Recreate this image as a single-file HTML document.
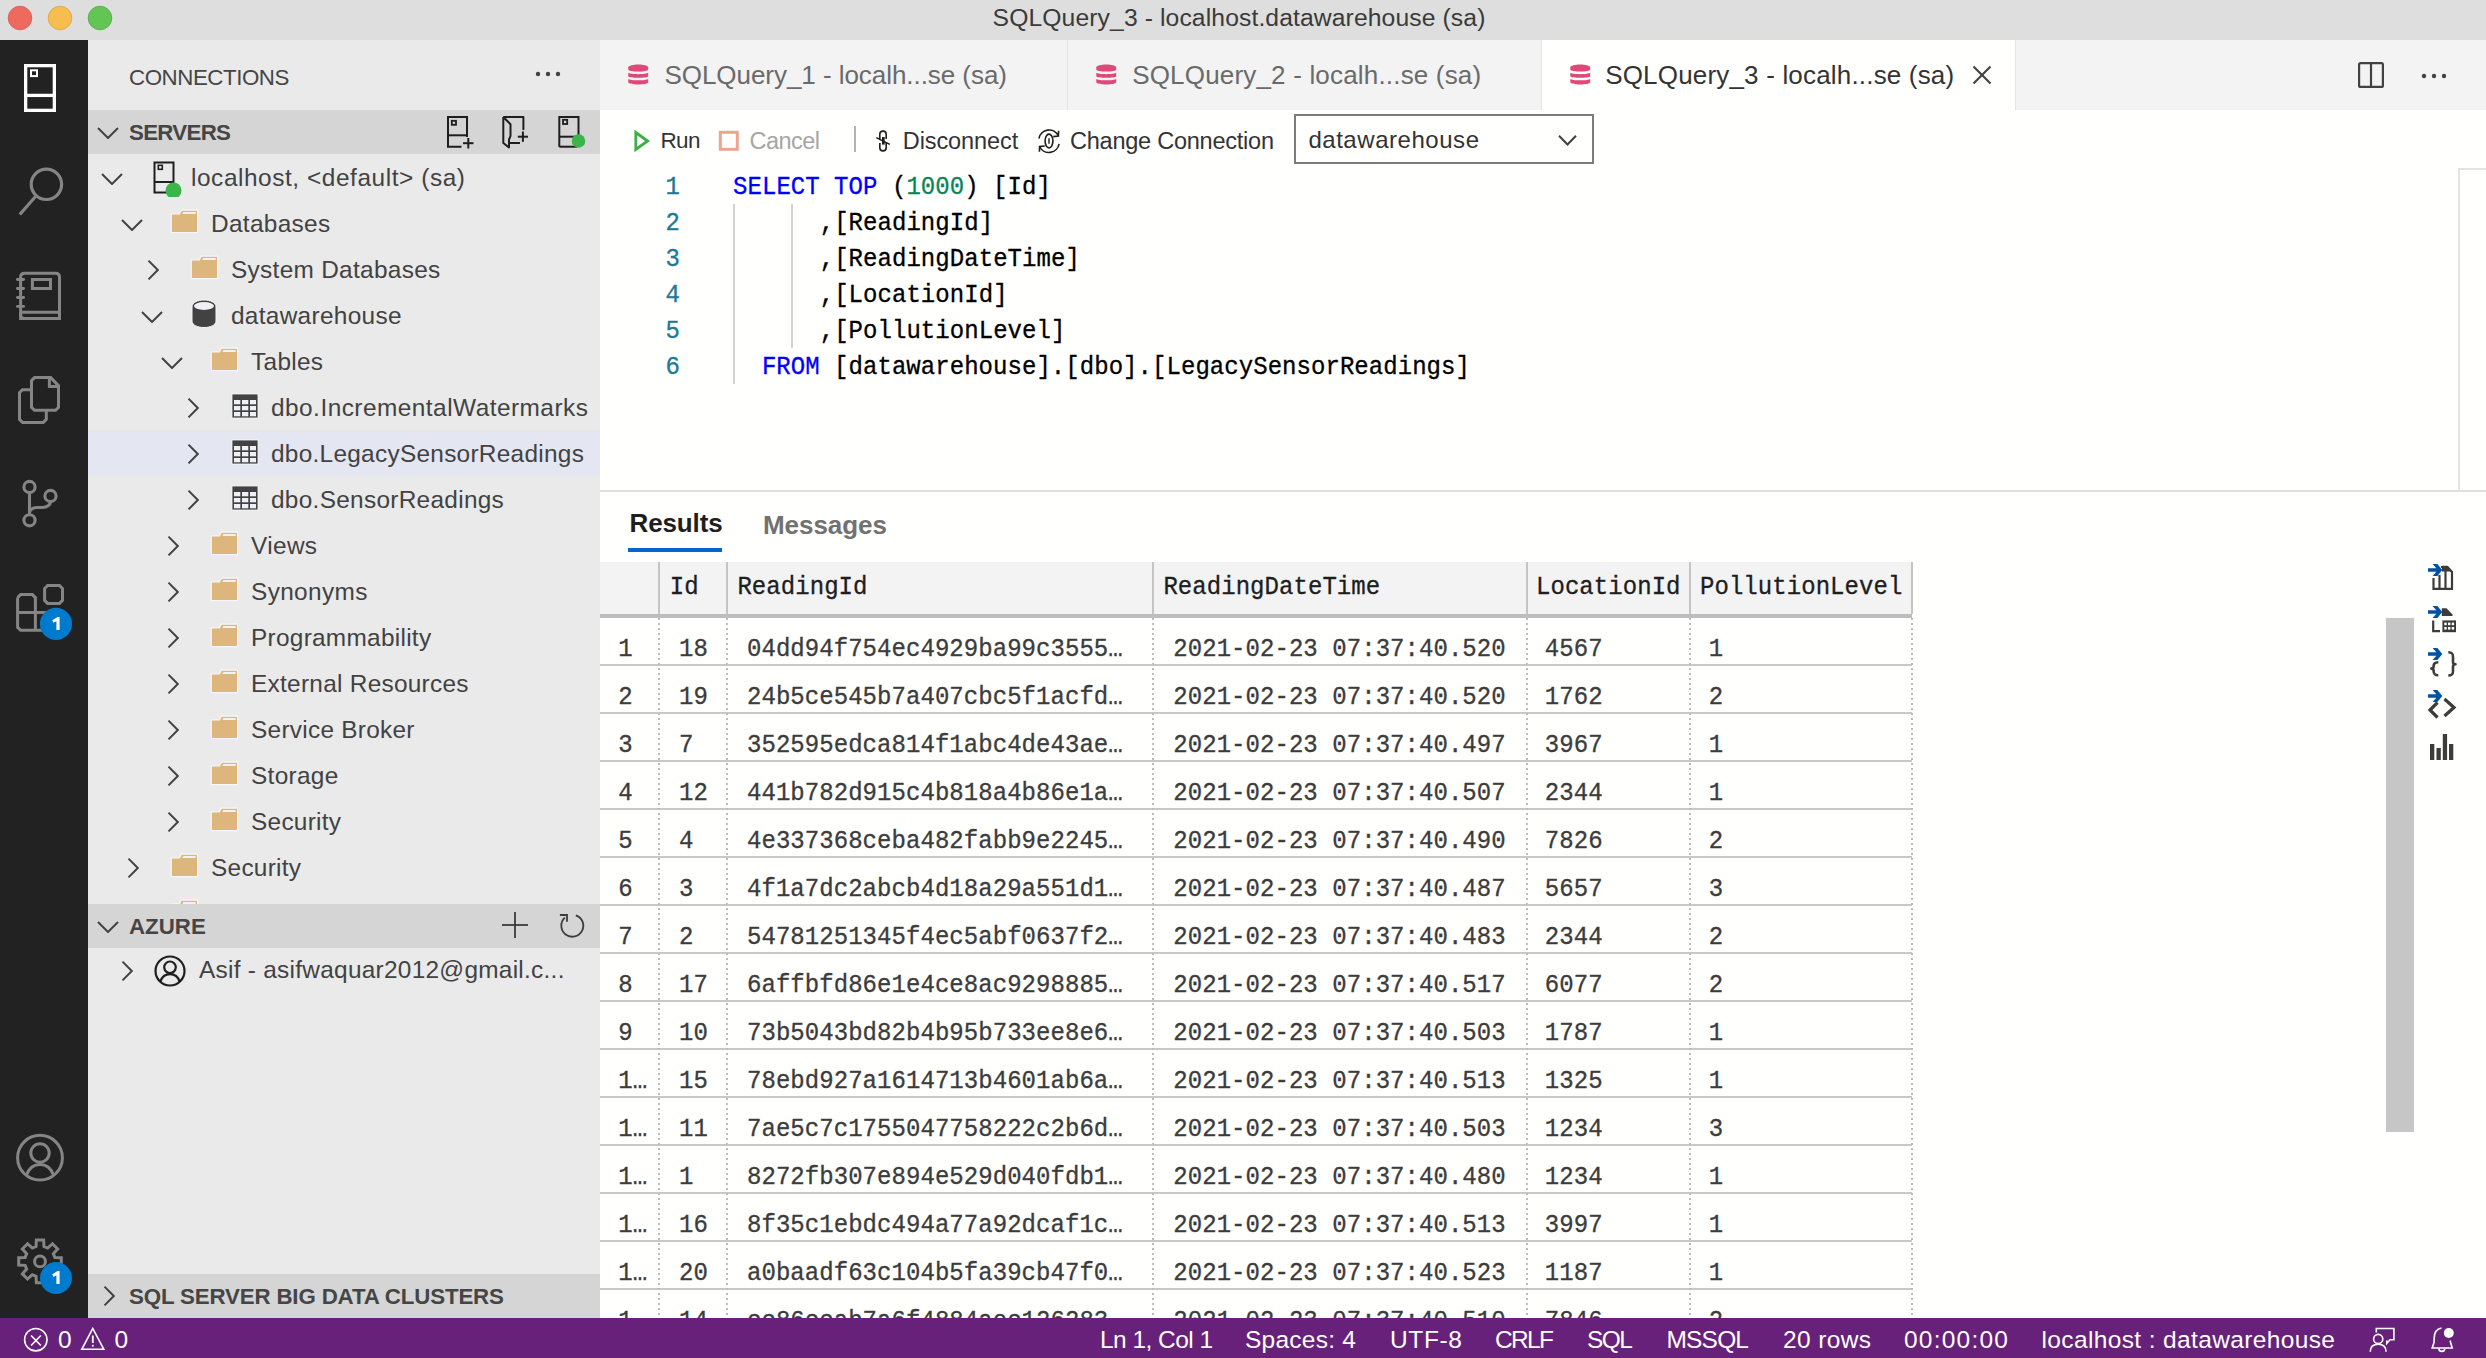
<!DOCTYPE html>
<html><head><meta charset="utf-8"><style>
html,body{margin:0;padding:0;width:2486px;height:1358px;overflow:hidden;background:#fffffe;}
.t{position:absolute;white-space:pre;line-height:1;}
.r{position:absolute;display:block;}
</style></head><body>
<div class="r" style="left:0px;top:0px;width:2486px;height:40px;background:#dedede;"></div>
<div class="r" style="left:0px;top:40px;width:88px;height:1278px;background:#222222;"></div>
<div class="r" style="left:88px;top:40px;width:512px;height:1278px;background:#eaeaea;"></div>
<div class="r" style="left:600px;top:40px;width:1886px;height:70px;background:#f3f3f3;"></div>
<div class="r" style="left:600px;top:110px;width:1886px;height:1208px;background:#fffffe;"></div>
<div class="r" style="left:0px;top:1318px;width:2486px;height:40px;background:#68217a;"></div>
<svg class="r" style="left:7px;top:5px;" width="26" height="26" viewBox="0 0 26 26"><circle cx="13" cy="13" r="11.8" fill="#ee6a5f" stroke="#d35a50" stroke-width="0.8"/></svg>
<svg class="r" style="left:47px;top:5px;" width="26" height="26" viewBox="0 0 26 26"><circle cx="13" cy="13" r="11.8" fill="#f5be4f" stroke="#d9a23f" stroke-width="0.8"/></svg>
<svg class="r" style="left:87px;top:5px;" width="26" height="26" viewBox="0 0 26 26"><circle cx="13" cy="13" r="11.8" fill="#62c554" stroke="#52a844" stroke-width="0.8"/></svg>
<div class="t" style="left:992.6px;top:5.90px;font-size:24.70px;color:#3a3a3a;font-weight:400;font-family:'Liberation Sans', sans-serif;letter-spacing:0.106px;">SQLQuery_3 - localhost.datawarehouse (sa)</div>
<svg class="r" style="left:0px;top:40px;" width="88" height="100" viewBox="0 0 88 100"><g fill="none" stroke="#ffffff" stroke-width="3.3">
<rect x="25.65" y="25.65" width="28.7" height="44.7"/>
<line x1="25.65" y1="55.4" x2="54.35" y2="55.4"/>
<rect x="31" y="30.3" width="6" height="5.8" stroke-width="2"/>
</g></svg>
<svg class="r" style="left:0px;top:150px;" width="88" height="80" viewBox="0 0 88 80"><g fill="none" stroke="#858585" stroke-width="3.2" stroke-linecap="butt">
<circle cx="46.4" cy="34.3" r="15.2"/>
<line x1="19.8" y1="64.5" x2="35.5" y2="46.5"/>
</g></svg>
<svg class="r" style="left:0px;top:262px;" width="88" height="70" viewBox="0 0 88 70"><g fill="none" stroke="#858585" stroke-width="3">
<path d="M59.5 56.4 L20.6 56.4 L20.6 15.3 Q20.6 11.3 24.6 11.3 L55.5 11.3 Q59.5 11.3 59.5 15.3 Z"/>
<path d="M20.6 50.3 L59.5 50.3"/>
<path d="M20.6 50.3 L20.6 52.4 Q20.6 56.4 24.6 56.4"/>
<rect x="32.4" y="17.5" width="18.1" height="9"/>
</g>
<g stroke="#858585" stroke-width="2.8" stroke-linecap="round">
<line x1="17.4" y1="17.5" x2="23.6" y2="17.5"/><line x1="17.4" y1="26.5" x2="23.6" y2="26.5"/>
<line x1="17.4" y1="35.5" x2="23.6" y2="35.5"/><line x1="17.4" y1="44.4" x2="23.6" y2="44.4"/>
</g></svg>
<svg class="r" style="left:0px;top:366px;" width="88" height="70" viewBox="0 0 88 70"><g fill="none" stroke="#858585" stroke-width="3" stroke-linejoin="miter">
<path d="M31.5 23.7 L22.5 23.7 L19.5 26.7 L19.5 53.4 L22.5 56.4 L43.3 56.4 L46.3 53.4 L46.3 44.3"/>
<path d="M34.5 11.6 L50.7 11.6 L58.5 19.6 L58.5 41.3 L55.5 44.3 L34.5 44.3 L31.5 41.3 L31.5 14.6 Z"/>
<path d="M49.4 11.6 L49.4 20.4 L58.5 20.4"/>
</g></svg>
<svg class="r" style="left:0px;top:470px;" width="88" height="70" viewBox="0 0 88 70"><g fill="none" stroke="#858585" stroke-width="3.1">
<circle cx="29.5" cy="17" r="5.6"/><circle cx="50.5" cy="26" r="5.6"/><circle cx="29.5" cy="50.3" r="5.6"/>
<path d="M29.5 22.6 L29.5 44.7"/>
<path d="M29.5 42 C31 38.5 33.5 37.5 37 37.5 L42.5 37.5 C47 37.5 50.5 35 50.5 31.6"/>
</g></svg>
<svg class="r" style="left:0px;top:576px;" width="88" height="70" viewBox="0 0 88 70"><g fill="none" stroke="#858585" stroke-width="3">
<path d="M17.6 21.6 L20.6 18.6 L32.4 18.6 L35.4 21.6 L35.4 54.3 M17.6 21.6 L17.6 51.3 L20.6 54.3 L53 54.3 L53 36.5 L17.6 36.5"/>
<path d="M47.6 9.5 L59.5 9.5 L62.5 12.5 L62.5 24.4 L59.5 27.4 L47.6 27.4 L44.6 24.4 L44.6 12.5 Z"/>
</g>
<circle cx="56" cy="47.9" r="16.1" fill="#007acc"/>
<path d="M52.3 44.2 L57.6 41 L59.6 41 L59.6 54 L56.4 54 L56.4 45.2 L53.4 46.8 Z" fill="#ffffff"/></svg>
<svg class="r" style="left:0px;top:1128px;" width="88" height="70" viewBox="0 0 88 70"><g fill="none" stroke="#858585" stroke-width="3">
<circle cx="40" cy="29.7" r="22.4"/>
<circle cx="40" cy="25" r="9.2"/>
<path d="M26.5 47 C29 40 34 36.4 40 36.4 C46 36.4 51 40 53.5 47"/>
</g></svg>
<svg class="r" style="left:0px;top:1228px;" width="88" height="90" viewBox="0 0 88 90"><g fill="none" stroke="#858585" stroke-width="3" stroke-linejoin="miter">
<path d="M36.04 18.52 L36.35 12.11 L43.65 12.11 L43.96 18.52 L47.72 20.08 L52.47 15.76 L57.64 20.93 L53.32 25.68 L54.88 29.44 L61.29 29.75 L61.29 37.05 L54.88 37.36 L53.32 41.12 L57.64 45.87 L52.47 51.04 L47.72 46.72 L43.96 48.28 L43.65 54.69 L36.35 54.69 L36.04 48.28 L32.28 46.72 L27.53 51.04 L22.36 45.87 L26.68 41.12 L25.12 37.36 L18.71 37.05 L18.71 29.75 L25.12 29.44 L26.68 25.68 L22.36 20.93 L27.53 15.76 L32.28 20.08 Z"/>
<circle cx="40" cy="33.4" r="5.4"/>
</g>
<circle cx="56" cy="50" r="16" fill="#007acc"/>
<path d="M52.3 46.3 L57.6 43.1 L59.6 43.1 L59.6 56.1 L56.4 56.1 L56.4 47.3 L53.4 48.9 Z" fill="#ffffff"/></svg>
<div class="t" style="left:129.0px;top:66.50px;font-size:22.30px;color:#454545;font-weight:400;font-family:'Liberation Sans', sans-serif;letter-spacing:-0.438px;">CONNECTIONS</div>
<svg class="r" style="left:535px;top:71px;" width="6" height="6" viewBox="0 0 6 6"><circle cx="3" cy="3" r="2.2" fill="#424242"/></svg>
<svg class="r" style="left:545px;top:71px;" width="6" height="6" viewBox="0 0 6 6"><circle cx="3" cy="3" r="2.2" fill="#424242"/></svg>
<svg class="r" style="left:555px;top:71px;" width="6" height="6" viewBox="0 0 6 6"><circle cx="3" cy="3" r="2.2" fill="#424242"/></svg>
<div class="r" style="left:88px;top:110px;width:512px;height:44px;background:#d5d5d5;"></div>
<svg class="r" style="left:97px;top:127px;" width="22" height="12" viewBox="0 0 22 12"><path d="M1 1 L11 11 L21 1" fill="none" stroke="#424242" stroke-width="2"/></svg>
<div class="t" style="left:129.0px;top:122.00px;font-size:22.30px;color:#454545;font-weight:700;font-family:'Liberation Sans', sans-serif;letter-spacing:-0.697px;">SERVERS</div>
<svg class="r" style="left:440px;top:110px;" width="40" height="44" viewBox="0 0 40 44"><g fill="none" stroke="#1e1e1e" stroke-width="2">
<path d="M21.5 36.7 L8 36.7 L8 7 L27 7 L27 27"/><line x1="8" y1="25.3" x2="27" y2="25.3"/>
<rect x="11.8" y="10.8" width="4.2" height="4" stroke-width="1.8"/>
<line x1="28.3" y1="28" x2="28.3" y2="38.5"/><line x1="23" y1="33.2" x2="33.5" y2="33.2"/>
</g></svg>
<svg class="r" style="left:495px;top:110px;" width="40" height="44" viewBox="0 0 40 44"><g fill="none" stroke="#1e1e1e" stroke-width="2" stroke-linejoin="round">
<path d="M8.3 7 L28.4 7 L28.4 20"/>
<path d="M8.3 7 L8.3 33 L14 37.5 L14 30 C14 28.5 15.5 27 15.5 25.7 L15.5 14.3 L8.3 7"/>
<path d="M14 33 L25 33"/>
<line x1="27.9" y1="21.5" x2="27.9" y2="31.8"/><line x1="22.8" y1="26.7" x2="33" y2="26.7"/>
</g></svg>
<svg class="r" style="left:551px;top:110px;" width="40" height="44" viewBox="0 0 40 44"><g fill="none" stroke="#1e1e1e" stroke-width="2">
<path d="M8.3 36.7 L8.3 7 L27.5 7 L27.5 27"/><line x1="8.3" y1="26.7" x2="25" y2="26.7"/><line x1="8.3" y1="36.7" x2="26" y2="36.7"/>
<rect x="12" y="9.8" width="4.2" height="4.2" stroke-width="1.8"/>
</g><circle cx="27.5" cy="31" r="6.8" fill="#3bb44a"/></svg>
<div class="r" style="left:88px;top:430px;width:512px;height:46px;background:#e4e6f1;"></div>
<svg class="r" style="left:101px;top:172.5px;" width="22" height="12" viewBox="0 0 22 12"><path d="M1 1 L11 11 L21 1" fill="none" stroke="#424242" stroke-width="2"/></svg>
<svg class="r" style="left:152px;top:160.5px;" width="30" height="36" viewBox="0 0 30 36"><g fill="none" stroke="#1e1e1e" stroke-width="2">
<rect x="2.5" y="1.5" width="19" height="30"/><line x1="2.5" y1="21" x2="21.5" y2="21"/>
<rect x="6.3" y="4.3" width="4" height="4" stroke-width="1.6"/></g>
<circle cx="21.5" cy="29.5" r="8" fill="#3bb44a"/></svg>
<div class="t" style="left:191.0px;top:166.00px;font-size:24.40px;color:#424242;font-weight:400;font-family:'Liberation Sans', sans-serif;letter-spacing:0.566px;">localhost, &lt;default&gt; (sa)</div>
<svg class="r" style="left:121px;top:218.5px;" width="22" height="12" viewBox="0 0 22 12"><path d="M1 1 L11 11 L21 1" fill="none" stroke="#424242" stroke-width="2"/></svg>
<svg class="r" style="left:169px;top:208px;" width="31" height="27" viewBox="0 0 31 27"><path d="M2 6 L10.4 6 L12.2 2.2 L28 2.2 Q28.6 2.2 28.6 3 L28.6 24 Q28.6 24.6 28 24.6 L3 24.6 Q2.2 24.6 2.2 23.8 L2.2 6.8 Q2.2 6 3 6 Z" fill="#dcb67a" stroke="#f7f8fb" stroke-width="1.2"/>
<path d="M13.2 6 L14.4 4 L26.7 4 L26.7 6 Z" fill="#f0f2f7"/></svg>
<div class="t" style="left:211.0px;top:212.00px;font-size:24.40px;color:#424242;font-weight:400;font-family:'Liberation Sans', sans-serif;letter-spacing:0.321px;">Databases</div>
<svg class="r" style="left:146.5px;top:259.3px;" width="12" height="22" viewBox="0 0 12 22"><path d="M1.5 1.6 L10.8 11 L1.5 20.4" fill="none" stroke="#424242" stroke-width="2"/></svg>
<svg class="r" style="left:189px;top:254px;" width="31" height="27" viewBox="0 0 31 27"><path d="M2 6 L10.4 6 L12.2 2.2 L28 2.2 Q28.6 2.2 28.6 3 L28.6 24 Q28.6 24.6 28 24.6 L3 24.6 Q2.2 24.6 2.2 23.8 L2.2 6.8 Q2.2 6 3 6 Z" fill="#dcb67a" stroke="#f7f8fb" stroke-width="1.2"/>
<path d="M13.2 6 L14.4 4 L26.7 4 L26.7 6 Z" fill="#f0f2f7"/></svg>
<div class="t" style="left:231.0px;top:258.00px;font-size:24.40px;color:#424242;font-weight:400;font-family:'Liberation Sans', sans-serif;letter-spacing:0.300px;">System Databases</div>
<svg class="r" style="left:141px;top:310.5px;" width="22" height="12" viewBox="0 0 22 12"><path d="M1 1 L11 11 L21 1" fill="none" stroke="#424242" stroke-width="2"/></svg>
<svg class="r" style="left:191px;top:299px;overflow:visible;" width="27" height="33" viewBox="0 0 27 33"><path d="M1 8 C1 -1.3 25 -1.3 25 8 L25 22 C25 30.7 1 30.7 1 22 Z" fill="#424242" stroke="#f7f8fb" stroke-width="1"/>
<ellipse cx="13" cy="7" rx="10" ry="3.9" fill="#eef0f5"/></svg>
<div class="t" style="left:231.0px;top:304.00px;font-size:24.40px;color:#424242;font-weight:400;font-family:'Liberation Sans', sans-serif;letter-spacing:0.306px;">datawarehouse</div>
<svg class="r" style="left:161px;top:356.5px;" width="22" height="12" viewBox="0 0 22 12"><path d="M1 1 L11 11 L21 1" fill="none" stroke="#424242" stroke-width="2"/></svg>
<svg class="r" style="left:209px;top:346px;" width="31" height="27" viewBox="0 0 31 27"><path d="M2 6 L10.4 6 L12.2 2.2 L28 2.2 Q28.6 2.2 28.6 3 L28.6 24 Q28.6 24.6 28 24.6 L3 24.6 Q2.2 24.6 2.2 23.8 L2.2 6.8 Q2.2 6 3 6 Z" fill="#dcb67a" stroke="#f7f8fb" stroke-width="1.2"/>
<path d="M13.2 6 L14.4 4 L26.7 4 L26.7 6 Z" fill="#f0f2f7"/></svg>
<div class="t" style="left:251.0px;top:350.00px;font-size:24.40px;color:#424242;font-weight:400;font-family:'Liberation Sans', sans-serif;letter-spacing:0.310px;">Tables</div>
<svg class="r" style="left:186.5px;top:397.3px;" width="12" height="22" viewBox="0 0 12 22"><path d="M1.5 1.6 L10.8 11 L1.5 20.4" fill="none" stroke="#424242" stroke-width="2"/></svg>
<svg class="r" style="left:231px;top:393px;" width="28" height="26" viewBox="0 0 28 26"><rect x="1" y="1" width="26" height="24" fill="#424242" stroke="#f7f8fb" stroke-width="0.8"/>
<g fill="#eef0f5">
<rect x="3" y="7" width="6.3" height="4.3"/><rect x="11" y="7" width="6.3" height="4.3"/><rect x="19" y="7" width="6" height="4.3"/>
<rect x="3" y="13" width="6.3" height="4.3"/><rect x="11" y="13" width="6.3" height="4.3"/><rect x="19" y="13" width="6" height="4.3"/>
<rect x="3" y="19" width="6.3" height="4.3"/><rect x="11" y="19" width="6.3" height="4.3"/><rect x="19" y="19" width="6" height="4.3"/>
</g></svg>
<div class="t" style="left:271.0px;top:396.00px;font-size:24.40px;color:#424242;font-weight:400;font-family:'Liberation Sans', sans-serif;letter-spacing:0.476px;">dbo.IncrementalWatermarks</div>
<svg class="r" style="left:186.5px;top:443.3px;" width="12" height="22" viewBox="0 0 12 22"><path d="M1.5 1.6 L10.8 11 L1.5 20.4" fill="none" stroke="#424242" stroke-width="2"/></svg>
<svg class="r" style="left:231px;top:439px;" width="28" height="26" viewBox="0 0 28 26"><rect x="1" y="1" width="26" height="24" fill="#424242" stroke="#f7f8fb" stroke-width="0.8"/>
<g fill="#eef0f5">
<rect x="3" y="7" width="6.3" height="4.3"/><rect x="11" y="7" width="6.3" height="4.3"/><rect x="19" y="7" width="6" height="4.3"/>
<rect x="3" y="13" width="6.3" height="4.3"/><rect x="11" y="13" width="6.3" height="4.3"/><rect x="19" y="13" width="6" height="4.3"/>
<rect x="3" y="19" width="6.3" height="4.3"/><rect x="11" y="19" width="6.3" height="4.3"/><rect x="19" y="19" width="6" height="4.3"/>
</g></svg>
<div class="t" style="left:271.0px;top:442.00px;font-size:24.40px;color:#424242;font-weight:400;font-family:'Liberation Sans', sans-serif;letter-spacing:0.279px;">dbo.LegacySensorReadings</div>
<svg class="r" style="left:186.5px;top:489.3px;" width="12" height="22" viewBox="0 0 12 22"><path d="M1.5 1.6 L10.8 11 L1.5 20.4" fill="none" stroke="#424242" stroke-width="2"/></svg>
<svg class="r" style="left:231px;top:485px;" width="28" height="26" viewBox="0 0 28 26"><rect x="1" y="1" width="26" height="24" fill="#424242" stroke="#f7f8fb" stroke-width="0.8"/>
<g fill="#eef0f5">
<rect x="3" y="7" width="6.3" height="4.3"/><rect x="11" y="7" width="6.3" height="4.3"/><rect x="19" y="7" width="6" height="4.3"/>
<rect x="3" y="13" width="6.3" height="4.3"/><rect x="11" y="13" width="6.3" height="4.3"/><rect x="19" y="13" width="6" height="4.3"/>
<rect x="3" y="19" width="6.3" height="4.3"/><rect x="11" y="19" width="6.3" height="4.3"/><rect x="19" y="19" width="6" height="4.3"/>
</g></svg>
<div class="t" style="left:271.0px;top:488.00px;font-size:24.40px;color:#424242;font-weight:400;font-family:'Liberation Sans', sans-serif;letter-spacing:0.295px;">dbo.SensorReadings</div>
<svg class="r" style="left:166.5px;top:535.3px;" width="12" height="22" viewBox="0 0 12 22"><path d="M1.5 1.6 L10.8 11 L1.5 20.4" fill="none" stroke="#424242" stroke-width="2"/></svg>
<svg class="r" style="left:209px;top:530px;" width="31" height="27" viewBox="0 0 31 27"><path d="M2 6 L10.4 6 L12.2 2.2 L28 2.2 Q28.6 2.2 28.6 3 L28.6 24 Q28.6 24.6 28 24.6 L3 24.6 Q2.2 24.6 2.2 23.8 L2.2 6.8 Q2.2 6 3 6 Z" fill="#dcb67a" stroke="#f7f8fb" stroke-width="1.2"/>
<path d="M13.2 6 L14.4 4 L26.7 4 L26.7 6 Z" fill="#f0f2f7"/></svg>
<div class="t" style="left:251.0px;top:534.00px;font-size:24.40px;color:#424242;font-weight:400;font-family:'Liberation Sans', sans-serif;letter-spacing:0.356px;">Views</div>
<svg class="r" style="left:166.5px;top:581.3px;" width="12" height="22" viewBox="0 0 12 22"><path d="M1.5 1.6 L10.8 11 L1.5 20.4" fill="none" stroke="#424242" stroke-width="2"/></svg>
<svg class="r" style="left:209px;top:576px;" width="31" height="27" viewBox="0 0 31 27"><path d="M2 6 L10.4 6 L12.2 2.2 L28 2.2 Q28.6 2.2 28.6 3 L28.6 24 Q28.6 24.6 28 24.6 L3 24.6 Q2.2 24.6 2.2 23.8 L2.2 6.8 Q2.2 6 3 6 Z" fill="#dcb67a" stroke="#f7f8fb" stroke-width="1.2"/>
<path d="M13.2 6 L14.4 4 L26.7 4 L26.7 6 Z" fill="#f0f2f7"/></svg>
<div class="t" style="left:251.0px;top:580.00px;font-size:24.40px;color:#424242;font-weight:400;font-family:'Liberation Sans', sans-serif;letter-spacing:0.358px;">Synonyms</div>
<svg class="r" style="left:166.5px;top:627.3px;" width="12" height="22" viewBox="0 0 12 22"><path d="M1.5 1.6 L10.8 11 L1.5 20.4" fill="none" stroke="#424242" stroke-width="2"/></svg>
<svg class="r" style="left:209px;top:622px;" width="31" height="27" viewBox="0 0 31 27"><path d="M2 6 L10.4 6 L12.2 2.2 L28 2.2 Q28.6 2.2 28.6 3 L28.6 24 Q28.6 24.6 28 24.6 L3 24.6 Q2.2 24.6 2.2 23.8 L2.2 6.8 Q2.2 6 3 6 Z" fill="#dcb67a" stroke="#f7f8fb" stroke-width="1.2"/>
<path d="M13.2 6 L14.4 4 L26.7 4 L26.7 6 Z" fill="#f0f2f7"/></svg>
<div class="t" style="left:251.0px;top:626.00px;font-size:24.40px;color:#424242;font-weight:400;font-family:'Liberation Sans', sans-serif;letter-spacing:0.277px;">Programmability</div>
<svg class="r" style="left:166.5px;top:673.3px;" width="12" height="22" viewBox="0 0 12 22"><path d="M1.5 1.6 L10.8 11 L1.5 20.4" fill="none" stroke="#424242" stroke-width="2"/></svg>
<svg class="r" style="left:209px;top:668px;" width="31" height="27" viewBox="0 0 31 27"><path d="M2 6 L10.4 6 L12.2 2.2 L28 2.2 Q28.6 2.2 28.6 3 L28.6 24 Q28.6 24.6 28 24.6 L3 24.6 Q2.2 24.6 2.2 23.8 L2.2 6.8 Q2.2 6 3 6 Z" fill="#dcb67a" stroke="#f7f8fb" stroke-width="1.2"/>
<path d="M13.2 6 L14.4 4 L26.7 4 L26.7 6 Z" fill="#f0f2f7"/></svg>
<div class="t" style="left:251.0px;top:672.00px;font-size:24.40px;color:#424242;font-weight:400;font-family:'Liberation Sans', sans-serif;letter-spacing:0.276px;">External Resources</div>
<svg class="r" style="left:166.5px;top:719.3px;" width="12" height="22" viewBox="0 0 12 22"><path d="M1.5 1.6 L10.8 11 L1.5 20.4" fill="none" stroke="#424242" stroke-width="2"/></svg>
<svg class="r" style="left:209px;top:714px;" width="31" height="27" viewBox="0 0 31 27"><path d="M2 6 L10.4 6 L12.2 2.2 L28 2.2 Q28.6 2.2 28.6 3 L28.6 24 Q28.6 24.6 28 24.6 L3 24.6 Q2.2 24.6 2.2 23.8 L2.2 6.8 Q2.2 6 3 6 Z" fill="#dcb67a" stroke="#f7f8fb" stroke-width="1.2"/>
<path d="M13.2 6 L14.4 4 L26.7 4 L26.7 6 Z" fill="#f0f2f7"/></svg>
<div class="t" style="left:251.0px;top:718.00px;font-size:24.40px;color:#424242;font-weight:400;font-family:'Liberation Sans', sans-serif;letter-spacing:0.271px;">Service Broker</div>
<svg class="r" style="left:166.5px;top:765.3px;" width="12" height="22" viewBox="0 0 12 22"><path d="M1.5 1.6 L10.8 11 L1.5 20.4" fill="none" stroke="#424242" stroke-width="2"/></svg>
<svg class="r" style="left:209px;top:760px;" width="31" height="27" viewBox="0 0 31 27"><path d="M2 6 L10.4 6 L12.2 2.2 L28 2.2 Q28.6 2.2 28.6 3 L28.6 24 Q28.6 24.6 28 24.6 L3 24.6 Q2.2 24.6 2.2 23.8 L2.2 6.8 Q2.2 6 3 6 Z" fill="#dcb67a" stroke="#f7f8fb" stroke-width="1.2"/>
<path d="M13.2 6 L14.4 4 L26.7 4 L26.7 6 Z" fill="#f0f2f7"/></svg>
<div class="t" style="left:251.0px;top:764.00px;font-size:24.40px;color:#424242;font-weight:400;font-family:'Liberation Sans', sans-serif;letter-spacing:0.313px;">Storage</div>
<svg class="r" style="left:166.5px;top:811.3px;" width="12" height="22" viewBox="0 0 12 22"><path d="M1.5 1.6 L10.8 11 L1.5 20.4" fill="none" stroke="#424242" stroke-width="2"/></svg>
<svg class="r" style="left:209px;top:806px;" width="31" height="27" viewBox="0 0 31 27"><path d="M2 6 L10.4 6 L12.2 2.2 L28 2.2 Q28.6 2.2 28.6 3 L28.6 24 Q28.6 24.6 28 24.6 L3 24.6 Q2.2 24.6 2.2 23.8 L2.2 6.8 Q2.2 6 3 6 Z" fill="#dcb67a" stroke="#f7f8fb" stroke-width="1.2"/>
<path d="M13.2 6 L14.4 4 L26.7 4 L26.7 6 Z" fill="#f0f2f7"/></svg>
<div class="t" style="left:251.0px;top:810.00px;font-size:24.40px;color:#424242;font-weight:400;font-family:'Liberation Sans', sans-serif;letter-spacing:0.277px;">Security</div>
<svg class="r" style="left:126.5px;top:857.3px;" width="12" height="22" viewBox="0 0 12 22"><path d="M1.5 1.6 L10.8 11 L1.5 20.4" fill="none" stroke="#424242" stroke-width="2"/></svg>
<svg class="r" style="left:169px;top:852px;" width="31" height="27" viewBox="0 0 31 27"><path d="M2 6 L10.4 6 L12.2 2.2 L28 2.2 Q28.6 2.2 28.6 3 L28.6 24 Q28.6 24.6 28 24.6 L3 24.6 Q2.2 24.6 2.2 23.8 L2.2 6.8 Q2.2 6 3 6 Z" fill="#dcb67a" stroke="#f7f8fb" stroke-width="1.2"/>
<path d="M13.2 6 L14.4 4 L26.7 4 L26.7 6 Z" fill="#f0f2f7"/></svg>
<div class="t" style="left:211.0px;top:856.00px;font-size:24.40px;color:#424242;font-weight:400;font-family:'Liberation Sans', sans-serif;letter-spacing:0.277px;">Security</div>
<div class="r" style="left:0;top:0;width:600px;height:904px;overflow:hidden">
<svg class="r" style="left:169px;top:898px;" width="31" height="27" viewBox="0 0 31 27"><path d="M2 6 L10.4 6 L12.2 2.2 L28 2.2 Q28.6 2.2 28.6 3 L28.6 24 Q28.6 24.6 28 24.6 L3 24.6 Q2.2 24.6 2.2 23.8 L2.2 6.8 Q2.2 6 3 6 Z" fill="#dcb67a" stroke="#f7f8fb" stroke-width="1.2"/>
<path d="M13.2 6 L14.4 4 L26.7 4 L26.7 6 Z" fill="#f0f2f7"/></svg>
</div>
<div class="r" style="left:88px;top:904px;width:512px;height:44px;background:#d5d5d5;"></div>
<svg class="r" style="left:97px;top:920.7px;" width="22" height="12" viewBox="0 0 22 12"><path d="M1 1 L11 11 L21 1" fill="none" stroke="#424242" stroke-width="2"/></svg>
<div class="t" style="left:129.0px;top:916.00px;font-size:22.30px;color:#454545;font-weight:700;font-family:'Liberation Sans', sans-serif;">AZURE</div>
<svg class="r" style="left:500px;top:910px;" width="30" height="30" viewBox="0 0 30 30"><g stroke="#3c3c3c" stroke-width="1.8"><line x1="15" y1="2" x2="15" y2="28"/><line x1="2" y1="15" x2="28" y2="15"/></g></svg>
<svg class="r" style="left:557px;top:910px;" width="30" height="30" viewBox="0 0 30 30"><path d="M18.8 5.3 A11 11 0 1 1 7.8 7.7" fill="none" stroke="#3c3c3c" stroke-width="1.8"/><path d="M2.9 5 L10 5 L10 11.7" fill="none" stroke="#3c3c3c" stroke-width="1.8"/></svg>
<svg class="r" style="left:121px;top:960px;" width="12" height="22" viewBox="0 0 12 22"><path d="M1.5 1.6 L10.8 11 L1.5 20.4" fill="none" stroke="#424242" stroke-width="2"/></svg>
<svg class="r" style="left:152px;top:953px;" width="36" height="36" viewBox="0 0 36 36"><g fill="none" stroke="#1e1e1e" stroke-width="2.2">
<circle cx="18" cy="18" r="14.5"/><circle cx="18" cy="14.3" r="5.8"/>
<path d="M8.3 28.8 C10 23.5 13.5 21.2 18 21.2 C22.5 21.2 26 23.5 27.7 28.8"/></g></svg>
<div class="t" style="left:199.0px;top:958.20px;font-size:24.40px;color:#424242;font-weight:400;font-family:'Liberation Sans', sans-serif;letter-spacing:0.276px;">Asif - asifwaquar2012@gmail.c...</div>
<div class="r" style="left:88px;top:1274px;width:512px;height:44px;background:#d5d5d5;"></div>
<svg class="r" style="left:103px;top:1285px;" width="12" height="22" viewBox="0 0 12 22"><path d="M1.5 1.6 L10.8 11 L1.5 20.4" fill="none" stroke="#424242" stroke-width="2"/></svg>
<div class="t" style="left:129.0px;top:1286.00px;font-size:22.30px;color:#454545;font-weight:700;font-family:'Liberation Sans', sans-serif;letter-spacing:-0.154px;">SQL SERVER BIG DATA CLUSTERS</div>
<div class="r" style="left:1067px;top:40px;width:1px;height:70px;background:#e5e5e5;"></div>
<div class="r" style="left:1541px;top:40px;width:1px;height:70px;background:#e5e5e5;"></div>
<div class="r" style="left:1542px;top:40px;width:473px;height:70px;background:#fffffe;"></div>
<div class="r" style="left:2015px;top:40px;width:1px;height:70px;background:#e5e5e5;"></div>
<svg class="r" style="left:628px;top:63.8px;" width="21" height="21" viewBox="0 0 21 21"><g fill="#e0487a">
<path d="M0.3 3.3 C0.3 -0.6 20.2 -0.6 20.2 3.3 L20.2 5.5 C20.2 8.2 0.3 8.2 0.3 5.5 Z"/>
<path d="M0.3 8.8 C2 10.6 18.5 10.6 20.2 8.8 L20.2 12.3 C20.2 14.3 0.3 14.3 0.3 12.3 Z"/>
<path d="M0.3 15 C2 16.8 18.5 16.8 20.2 15 L20.2 18.3 C20.2 21.2 0.3 21.2 0.3 18.3 Z"/>
</g></svg>
<div class="t" style="left:664.5px;top:61.50px;font-size:26.00px;color:#6a6a6a;font-weight:400;font-family:'Liberation Sans', sans-serif;letter-spacing:-0.051px;">SQLQuery_1 - localh...se (sa)</div>
<svg class="r" style="left:1096px;top:63.8px;" width="21" height="21" viewBox="0 0 21 21"><g fill="#e0487a">
<path d="M0.3 3.3 C0.3 -0.6 20.2 -0.6 20.2 3.3 L20.2 5.5 C20.2 8.2 0.3 8.2 0.3 5.5 Z"/>
<path d="M0.3 8.8 C2 10.6 18.5 10.6 20.2 8.8 L20.2 12.3 C20.2 14.3 0.3 14.3 0.3 12.3 Z"/>
<path d="M0.3 15 C2 16.8 18.5 16.8 20.2 15 L20.2 18.3 C20.2 21.2 0.3 21.2 0.3 18.3 Z"/>
</g></svg>
<div class="t" style="left:1132.2px;top:61.50px;font-size:26.00px;color:#6a6a6a;font-weight:400;font-family:'Liberation Sans', sans-serif;letter-spacing:0.181px;">SQLQuery_2 - localh...se (sa)</div>
<svg class="r" style="left:1570px;top:63.8px;" width="21" height="21" viewBox="0 0 21 21"><g fill="#e0487a">
<path d="M0.3 3.3 C0.3 -0.6 20.2 -0.6 20.2 3.3 L20.2 5.5 C20.2 8.2 0.3 8.2 0.3 5.5 Z"/>
<path d="M0.3 8.8 C2 10.6 18.5 10.6 20.2 8.8 L20.2 12.3 C20.2 14.3 0.3 14.3 0.3 12.3 Z"/>
<path d="M0.3 15 C2 16.8 18.5 16.8 20.2 15 L20.2 18.3 C20.2 21.2 0.3 21.2 0.3 18.3 Z"/>
</g></svg>
<div class="t" style="left:1605.2px;top:61.50px;font-size:26.00px;color:#333333;font-weight:400;font-family:'Liberation Sans', sans-serif;letter-spacing:0.181px;">SQLQuery_3 - localh...se (sa)</div>
<svg class="r" style="left:1970px;top:63px;" width="24" height="24" viewBox="0 0 24 24"><g stroke="#424242" stroke-width="2.2"><line x1="3.5" y1="3.5" x2="20.5" y2="20.5"/><line x1="20.5" y1="3.5" x2="3.5" y2="20.5"/></g></svg>
<svg class="r" style="left:2356px;top:60px;" width="30" height="30" viewBox="0 0 30 30"><g fill="none" stroke="#424242" stroke-width="2.2"><rect x="3.1" y="3.1" width="23.8" height="23.8" rx="1.5"/><line x1="15" y1="3" x2="15" y2="27"/></g></svg>
<svg class="r" style="left:2421px;top:73px;" width="6" height="6" viewBox="0 0 6 6"><circle cx="3" cy="3" r="2.2" fill="#424242"/></svg>
<svg class="r" style="left:2431px;top:73px;" width="6" height="6" viewBox="0 0 6 6"><circle cx="3" cy="3" r="2.2" fill="#424242"/></svg>
<svg class="r" style="left:2441px;top:73px;" width="6" height="6" viewBox="0 0 6 6"><circle cx="3" cy="3" r="2.2" fill="#424242"/></svg>
<svg class="r" style="left:630px;top:126px;" width="24" height="30" viewBox="0 0 24 30"><path d="M5.8 6.5 L17.6 15 L5.8 23.5 Z" fill="none" stroke="#3cb044" stroke-width="2.8" stroke-linejoin="miter" stroke-miterlimit="3"/></svg>
<div class="t" style="left:660.5px;top:129.80px;font-size:22.50px;color:#333333;font-weight:400;font-family:'Liberation Sans', sans-serif;letter-spacing:-0.638px;">Run</div>
<svg class="r" style="left:716px;top:127.6px;" width="26" height="26" viewBox="0 0 26 26"><rect x="4.3" y="4.3" width="17" height="17" fill="none" stroke="#eba58f" stroke-width="3"/></svg>
<div class="t" style="left:749.6px;top:129.80px;font-size:23.50px;color:#a6a6a6;font-weight:400;font-family:'Liberation Sans', sans-serif;letter-spacing:-0.551px;">Cancel</div>
<div class="r" style="left:854px;top:126px;width:2px;height:26px;background:#b4b4b4;"></div>
<svg class="r" style="left:872px;top:126px;" width="22" height="30" viewBox="0 0 22 30"><g fill="none" stroke="#1e1e1e" stroke-width="1.6">
<path d="M7.8 13 L7.8 8.3 A3.2 3.2 0 0 1 14.2 8.3 L14.2 13"/>
<path d="M7.8 17 L7.8 21.7 A3.2 3.2 0 0 0 14.2 21.7 L14.2 17"/>
<line x1="4.3" y1="11.6" x2="17.8" y2="18.4"/></g>
<rect x="10" y="11" width="2.7" height="7.6" fill="#1e1e1e"/></svg>
<div class="t" style="left:902.8px;top:129.80px;font-size:23.50px;color:#333333;font-weight:400;font-family:'Liberation Sans', sans-serif;letter-spacing:-0.095px;">Disconnect</div>
<svg class="r" style="left:1036px;top:128px;" width="26" height="26" viewBox="0 0 26 26"><g fill="none" stroke="#1e1e1e" stroke-width="1.6">
<path d="M2.9 10.5 A10.3 10.3 0 0 1 22.4 8"/><path d="M23.1 15.8 A10.3 10.3 0 0 1 3.6 18.5"/>
<path d="M17.2 8.6 L22.4 8 L22.6 2.8"/><path d="M8.8 18 L3.6 18.5 L3.4 23.8"/>
<ellipse cx="13" cy="13" rx="3.9" ry="6.9"/></g><line x1="13" y1="10.3" x2="13" y2="15.7" stroke="#1e1e1e" stroke-width="1.4"/></svg>
<div class="t" style="left:1070.0px;top:129.80px;font-size:23.50px;color:#333333;font-weight:400;font-family:'Liberation Sans', sans-serif;letter-spacing:-0.234px;">Change Connection</div>
<div class="r" style="left:1294px;top:114px;width:300px;height:50px;background:transparent;box-sizing:border-box;border:2px solid #7c7c7c;"></div>
<div class="t" style="left:1308.4px;top:128.00px;font-size:24.00px;color:#333333;font-weight:400;font-family:'Liberation Sans', sans-serif;letter-spacing:0.539px;">datawarehouse</div>
<svg class="r" style="left:1556px;top:130px;" width="24" height="20" viewBox="0 0 24 20"><path d="M3 5.8 L11.5 14.5 L20 5.8" fill="none" stroke="#424242" stroke-width="2"/></svg>
<div class="t" style="left:665.5px;top:176.00px;font-size:24.00px;color:#237893;font-weight:400;font-family:'Liberation Mono', monospace;transform:scaleY(1.090);transform-origin:0 18px;-webkit-text-stroke:0.30px #237893;">1</div>
<div class="t" style="left:665.5px;top:212.00px;font-size:24.00px;color:#237893;font-weight:400;font-family:'Liberation Mono', monospace;transform:scaleY(1.090);transform-origin:0 18px;-webkit-text-stroke:0.30px #237893;">2</div>
<div class="t" style="left:665.5px;top:248.00px;font-size:24.00px;color:#237893;font-weight:400;font-family:'Liberation Mono', monospace;transform:scaleY(1.090);transform-origin:0 18px;-webkit-text-stroke:0.30px #237893;">3</div>
<div class="t" style="left:665.5px;top:284.00px;font-size:24.00px;color:#237893;font-weight:400;font-family:'Liberation Mono', monospace;transform:scaleY(1.090);transform-origin:0 18px;-webkit-text-stroke:0.30px #237893;">4</div>
<div class="t" style="left:665.5px;top:320.00px;font-size:24.00px;color:#237893;font-weight:400;font-family:'Liberation Mono', monospace;transform:scaleY(1.090);transform-origin:0 18px;-webkit-text-stroke:0.30px #237893;">5</div>
<div class="t" style="left:665.5px;top:356.00px;font-size:24.00px;color:#237893;font-weight:400;font-family:'Liberation Mono', monospace;transform:scaleY(1.090);transform-origin:0 18px;-webkit-text-stroke:0.30px #237893;">6</div>
<div class="t" style="left:733.0px;top:176.00px;font-size:24.00px;color:#0000ff;font-weight:400;font-family:'Liberation Mono', monospace;letter-spacing:0.058px;transform:scaleY(1.090);transform-origin:0 18px;-webkit-text-stroke:0.30px #0000ff;">SELECT</div>
<div class="t" style="left:834.1px;top:176.00px;font-size:24.00px;color:#0000ff;font-weight:400;font-family:'Liberation Mono', monospace;letter-spacing:0.072px;transform:scaleY(1.090);transform-origin:0 18px;-webkit-text-stroke:0.30px #0000ff;">TOP</div>
<div class="t" style="left:892.0px;top:176.00px;font-size:24.00px;color:#000000;font-weight:400;font-family:'Liberation Mono', monospace;transform:scaleY(1.090);transform-origin:0 18px;-webkit-text-stroke:0.30px #000000;">(</div>
<div class="t" style="left:906.4px;top:176.00px;font-size:24.00px;color:#098658;font-weight:400;font-family:'Liberation Mono', monospace;letter-spacing:0.064px;transform:scaleY(1.090);transform-origin:0 18px;-webkit-text-stroke:0.30px #098658;">1000</div>
<div class="t" style="left:964.2px;top:176.00px;font-size:24.00px;color:#000000;font-weight:400;font-family:'Liberation Mono', monospace;letter-spacing:0.058px;transform:scaleY(1.090);transform-origin:0 18px;-webkit-text-stroke:0.30px #000000;">) [Id]</div>
<div class="t" style="left:819.7px;top:212.00px;font-size:24.00px;color:#000000;font-weight:400;font-family:'Liberation Mono', monospace;letter-spacing:0.052px;transform:scaleY(1.090);transform-origin:0 18px;-webkit-text-stroke:0.30px #000000;">,[ReadingId]</div>
<div class="t" style="left:819.7px;top:248.00px;font-size:24.00px;color:#000000;font-weight:400;font-family:'Liberation Mono', monospace;letter-spacing:0.051px;transform:scaleY(1.090);transform-origin:0 18px;-webkit-text-stroke:0.30px #000000;">,[ReadingDateTime]</div>
<div class="t" style="left:819.7px;top:284.00px;font-size:24.00px;color:#000000;font-weight:400;font-family:'Liberation Mono', monospace;letter-spacing:0.052px;transform:scaleY(1.090);transform-origin:0 18px;-webkit-text-stroke:0.30px #000000;">,[LocationId]</div>
<div class="t" style="left:819.7px;top:320.00px;font-size:24.00px;color:#000000;font-weight:400;font-family:'Liberation Mono', monospace;letter-spacing:0.051px;transform:scaleY(1.090);transform-origin:0 18px;-webkit-text-stroke:0.30px #000000;">,[PollutionLevel]</div>
<div class="t" style="left:761.9px;top:356.00px;font-size:24.00px;color:#0000ff;font-weight:400;font-family:'Liberation Mono', monospace;letter-spacing:0.064px;transform:scaleY(1.090);transform-origin:0 18px;-webkit-text-stroke:0.30px #0000ff;">FROM</div>
<div class="t" style="left:834.1px;top:356.00px;font-size:24.00px;color:#000000;font-weight:400;font-family:'Liberation Mono', monospace;letter-spacing:0.049px;transform:scaleY(1.090);transform-origin:0 18px;-webkit-text-stroke:0.30px #000000;">[datawarehouse].[dbo].[LegacySensorReadings]</div>
<div class="r" style="left:732.5px;top:204px;width:2px;height:180px;background:#d3d3d3;"></div>
<div class="r" style="left:790.5px;top:204px;width:2px;height:144px;background:#d3d3d3;"></div>
<div class="r" style="left:2458px;top:168px;width:2px;height:323px;background:#e3e3e3;"></div>
<div class="r" style="left:2458px;top:168px;width:28px;height:2px;background:#e3e3e3;"></div>
<div class="r" style="left:600px;top:490px;width:1886px;height:2px;background:#e0e0e0;"></div>
<div class="r" style="left:0;top:0;width:2486px;height:1318px;overflow:hidden">
<div class="t" style="left:629.6px;top:510.00px;font-size:26.00px;color:#1e1e1e;font-weight:700;font-family:'Liberation Sans', sans-serif;letter-spacing:-0.154px;">Results</div>
<div class="r" style="left:628px;top:548px;width:94px;height:4px;background:#0068cc;"></div>
<div class="t" style="left:763.0px;top:511.80px;font-size:26.00px;color:#717171;font-weight:700;font-family:'Liberation Sans', sans-serif;letter-spacing:-0.043px;">Messages</div>
<div class="r" style="left:600px;top:562px;width:1312px;height:52px;background:#f3f3f3;"></div>
<div class="r" style="left:600px;top:614px;width:1312px;height:4px;background:#bdbdbd;"></div>
<div class="r" style="left:658px;top:562px;width:2px;height:52px;background:#c4c4c4;"></div>
<div class="r" style="left:726px;top:562px;width:2px;height:52px;background:#c4c4c4;"></div>
<div class="r" style="left:1152px;top:562px;width:2px;height:52px;background:#c4c4c4;"></div>
<div class="r" style="left:1526px;top:562px;width:2px;height:52px;background:#c4c4c4;"></div>
<div class="r" style="left:1689px;top:562px;width:2px;height:52px;background:#c4c4c4;"></div>
<div class="r" style="left:1911px;top:562px;width:2px;height:52px;background:#c4c4c4;"></div>
<div class="t" style="left:669.7px;top:576.00px;font-size:24.00px;color:#1e1e1e;font-weight:400;font-family:'Liberation Mono', monospace;letter-spacing:0.096px;transform:scaleY(1.090);transform-origin:0 18px;-webkit-text-stroke:0.30px #1e1e1e;">Id</div>
<div class="t" style="left:737.4px;top:576.00px;font-size:24.00px;color:#1e1e1e;font-weight:400;font-family:'Liberation Mono', monospace;letter-spacing:0.054px;transform:scaleY(1.090);transform-origin:0 18px;-webkit-text-stroke:0.30px #1e1e1e;">ReadingId</div>
<div class="t" style="left:1163.4px;top:576.00px;font-size:24.00px;color:#1e1e1e;font-weight:400;font-family:'Liberation Mono', monospace;letter-spacing:0.052px;transform:scaleY(1.090);transform-origin:0 18px;-webkit-text-stroke:0.30px #1e1e1e;">ReadingDateTime</div>
<div class="t" style="left:1536.0px;top:576.00px;font-size:24.00px;color:#1e1e1e;font-weight:400;font-family:'Liberation Mono', monospace;letter-spacing:0.053px;transform:scaleY(1.090);transform-origin:0 18px;-webkit-text-stroke:0.30px #1e1e1e;">LocationId</div>
<div class="t" style="left:1700.0px;top:576.00px;font-size:24.00px;color:#1e1e1e;font-weight:400;font-family:'Liberation Mono', monospace;letter-spacing:0.052px;transform:scaleY(1.090);transform-origin:0 18px;-webkit-text-stroke:0.30px #1e1e1e;">PollutionLevel</div>
<div class="t" style="left:618.3px;top:638.00px;font-size:24.00px;color:#3c3c3c;font-weight:400;font-family:'Liberation Mono', monospace;transform:scaleY(1.090);transform-origin:0 18px;-webkit-text-stroke:0.30px #3c3c3c;">1</div>
<div class="t" style="left:679.1px;top:638.00px;font-size:24.00px;color:#3c3c3c;font-weight:400;font-family:'Liberation Mono', monospace;letter-spacing:0.096px;transform:scaleY(1.090);transform-origin:0 18px;-webkit-text-stroke:0.30px #3c3c3c;">18</div>
<div class="t" style="left:747.0px;top:638.00px;font-size:24.00px;color:#3c3c3c;font-weight:400;font-family:'Liberation Mono', monospace;letter-spacing:0.050px;transform:scaleY(1.090);transform-origin:0 18px;-webkit-text-stroke:0.30px #3c3c3c;">04dd94f754ec4929ba99c3555…</div>
<div class="t" style="left:1173.3px;top:638.00px;font-size:24.00px;color:#3c3c3c;font-weight:400;font-family:'Liberation Mono', monospace;letter-spacing:0.050px;transform:scaleY(1.090);transform-origin:0 18px;-webkit-text-stroke:0.30px #3c3c3c;">2021-02-23 07:37:40.520</div>
<div class="t" style="left:1544.8px;top:638.00px;font-size:24.00px;color:#3c3c3c;font-weight:400;font-family:'Liberation Mono', monospace;letter-spacing:0.064px;transform:scaleY(1.090);transform-origin:0 18px;-webkit-text-stroke:0.30px #3c3c3c;">4567</div>
<div class="t" style="left:1708.8px;top:638.00px;font-size:24.00px;color:#3c3c3c;font-weight:400;font-family:'Liberation Mono', monospace;transform:scaleY(1.090);transform-origin:0 18px;-webkit-text-stroke:0.30px #3c3c3c;">1</div>
<div class="r" style="left:600px;top:664px;width:1312px;height:2px;background:#c8c8c8;"></div>
<div class="t" style="left:618.3px;top:686.00px;font-size:24.00px;color:#3c3c3c;font-weight:400;font-family:'Liberation Mono', monospace;transform:scaleY(1.090);transform-origin:0 18px;-webkit-text-stroke:0.30px #3c3c3c;">2</div>
<div class="t" style="left:679.1px;top:686.00px;font-size:24.00px;color:#3c3c3c;font-weight:400;font-family:'Liberation Mono', monospace;letter-spacing:0.096px;transform:scaleY(1.090);transform-origin:0 18px;-webkit-text-stroke:0.30px #3c3c3c;">19</div>
<div class="t" style="left:747.0px;top:686.00px;font-size:24.00px;color:#3c3c3c;font-weight:400;font-family:'Liberation Mono', monospace;letter-spacing:0.050px;transform:scaleY(1.090);transform-origin:0 18px;-webkit-text-stroke:0.30px #3c3c3c;">24b5ce545b7a407cbc5f1acfd…</div>
<div class="t" style="left:1173.3px;top:686.00px;font-size:24.00px;color:#3c3c3c;font-weight:400;font-family:'Liberation Mono', monospace;letter-spacing:0.050px;transform:scaleY(1.090);transform-origin:0 18px;-webkit-text-stroke:0.30px #3c3c3c;">2021-02-23 07:37:40.520</div>
<div class="t" style="left:1544.8px;top:686.00px;font-size:24.00px;color:#3c3c3c;font-weight:400;font-family:'Liberation Mono', monospace;letter-spacing:0.064px;transform:scaleY(1.090);transform-origin:0 18px;-webkit-text-stroke:0.30px #3c3c3c;">1762</div>
<div class="t" style="left:1708.8px;top:686.00px;font-size:24.00px;color:#3c3c3c;font-weight:400;font-family:'Liberation Mono', monospace;transform:scaleY(1.090);transform-origin:0 18px;-webkit-text-stroke:0.30px #3c3c3c;">2</div>
<div class="r" style="left:600px;top:712px;width:1312px;height:2px;background:#c8c8c8;"></div>
<div class="t" style="left:618.3px;top:734.00px;font-size:24.00px;color:#3c3c3c;font-weight:400;font-family:'Liberation Mono', monospace;transform:scaleY(1.090);transform-origin:0 18px;-webkit-text-stroke:0.30px #3c3c3c;">3</div>
<div class="t" style="left:679.1px;top:734.00px;font-size:24.00px;color:#3c3c3c;font-weight:400;font-family:'Liberation Mono', monospace;transform:scaleY(1.090);transform-origin:0 18px;-webkit-text-stroke:0.30px #3c3c3c;">7</div>
<div class="t" style="left:747.0px;top:734.00px;font-size:24.00px;color:#3c3c3c;font-weight:400;font-family:'Liberation Mono', monospace;letter-spacing:0.050px;transform:scaleY(1.090);transform-origin:0 18px;-webkit-text-stroke:0.30px #3c3c3c;">352595edca814f1abc4de43ae…</div>
<div class="t" style="left:1173.3px;top:734.00px;font-size:24.00px;color:#3c3c3c;font-weight:400;font-family:'Liberation Mono', monospace;letter-spacing:0.050px;transform:scaleY(1.090);transform-origin:0 18px;-webkit-text-stroke:0.30px #3c3c3c;">2021-02-23 07:37:40.497</div>
<div class="t" style="left:1544.8px;top:734.00px;font-size:24.00px;color:#3c3c3c;font-weight:400;font-family:'Liberation Mono', monospace;letter-spacing:0.064px;transform:scaleY(1.090);transform-origin:0 18px;-webkit-text-stroke:0.30px #3c3c3c;">3967</div>
<div class="t" style="left:1708.8px;top:734.00px;font-size:24.00px;color:#3c3c3c;font-weight:400;font-family:'Liberation Mono', monospace;transform:scaleY(1.090);transform-origin:0 18px;-webkit-text-stroke:0.30px #3c3c3c;">1</div>
<div class="r" style="left:600px;top:760px;width:1312px;height:2px;background:#c8c8c8;"></div>
<div class="t" style="left:618.3px;top:782.00px;font-size:24.00px;color:#3c3c3c;font-weight:400;font-family:'Liberation Mono', monospace;transform:scaleY(1.090);transform-origin:0 18px;-webkit-text-stroke:0.30px #3c3c3c;">4</div>
<div class="t" style="left:679.1px;top:782.00px;font-size:24.00px;color:#3c3c3c;font-weight:400;font-family:'Liberation Mono', monospace;letter-spacing:0.096px;transform:scaleY(1.090);transform-origin:0 18px;-webkit-text-stroke:0.30px #3c3c3c;">12</div>
<div class="t" style="left:747.0px;top:782.00px;font-size:24.00px;color:#3c3c3c;font-weight:400;font-family:'Liberation Mono', monospace;letter-spacing:0.050px;transform:scaleY(1.090);transform-origin:0 18px;-webkit-text-stroke:0.30px #3c3c3c;">441b782d915c4b818a4b86e1a…</div>
<div class="t" style="left:1173.3px;top:782.00px;font-size:24.00px;color:#3c3c3c;font-weight:400;font-family:'Liberation Mono', monospace;letter-spacing:0.050px;transform:scaleY(1.090);transform-origin:0 18px;-webkit-text-stroke:0.30px #3c3c3c;">2021-02-23 07:37:40.507</div>
<div class="t" style="left:1544.8px;top:782.00px;font-size:24.00px;color:#3c3c3c;font-weight:400;font-family:'Liberation Mono', monospace;letter-spacing:0.064px;transform:scaleY(1.090);transform-origin:0 18px;-webkit-text-stroke:0.30px #3c3c3c;">2344</div>
<div class="t" style="left:1708.8px;top:782.00px;font-size:24.00px;color:#3c3c3c;font-weight:400;font-family:'Liberation Mono', monospace;transform:scaleY(1.090);transform-origin:0 18px;-webkit-text-stroke:0.30px #3c3c3c;">1</div>
<div class="r" style="left:600px;top:808px;width:1312px;height:2px;background:#c8c8c8;"></div>
<div class="t" style="left:618.3px;top:830.00px;font-size:24.00px;color:#3c3c3c;font-weight:400;font-family:'Liberation Mono', monospace;transform:scaleY(1.090);transform-origin:0 18px;-webkit-text-stroke:0.30px #3c3c3c;">5</div>
<div class="t" style="left:679.1px;top:830.00px;font-size:24.00px;color:#3c3c3c;font-weight:400;font-family:'Liberation Mono', monospace;transform:scaleY(1.090);transform-origin:0 18px;-webkit-text-stroke:0.30px #3c3c3c;">4</div>
<div class="t" style="left:747.0px;top:830.00px;font-size:24.00px;color:#3c3c3c;font-weight:400;font-family:'Liberation Mono', monospace;letter-spacing:0.050px;transform:scaleY(1.090);transform-origin:0 18px;-webkit-text-stroke:0.30px #3c3c3c;">4e337368ceba482fabb9e2245…</div>
<div class="t" style="left:1173.3px;top:830.00px;font-size:24.00px;color:#3c3c3c;font-weight:400;font-family:'Liberation Mono', monospace;letter-spacing:0.050px;transform:scaleY(1.090);transform-origin:0 18px;-webkit-text-stroke:0.30px #3c3c3c;">2021-02-23 07:37:40.490</div>
<div class="t" style="left:1544.8px;top:830.00px;font-size:24.00px;color:#3c3c3c;font-weight:400;font-family:'Liberation Mono', monospace;letter-spacing:0.064px;transform:scaleY(1.090);transform-origin:0 18px;-webkit-text-stroke:0.30px #3c3c3c;">7826</div>
<div class="t" style="left:1708.8px;top:830.00px;font-size:24.00px;color:#3c3c3c;font-weight:400;font-family:'Liberation Mono', monospace;transform:scaleY(1.090);transform-origin:0 18px;-webkit-text-stroke:0.30px #3c3c3c;">2</div>
<div class="r" style="left:600px;top:856px;width:1312px;height:2px;background:#c8c8c8;"></div>
<div class="t" style="left:618.3px;top:878.00px;font-size:24.00px;color:#3c3c3c;font-weight:400;font-family:'Liberation Mono', monospace;transform:scaleY(1.090);transform-origin:0 18px;-webkit-text-stroke:0.30px #3c3c3c;">6</div>
<div class="t" style="left:679.1px;top:878.00px;font-size:24.00px;color:#3c3c3c;font-weight:400;font-family:'Liberation Mono', monospace;transform:scaleY(1.090);transform-origin:0 18px;-webkit-text-stroke:0.30px #3c3c3c;">3</div>
<div class="t" style="left:747.0px;top:878.00px;font-size:24.00px;color:#3c3c3c;font-weight:400;font-family:'Liberation Mono', monospace;letter-spacing:0.050px;transform:scaleY(1.090);transform-origin:0 18px;-webkit-text-stroke:0.30px #3c3c3c;">4f1a7dc2abcb4d18a29a551d1…</div>
<div class="t" style="left:1173.3px;top:878.00px;font-size:24.00px;color:#3c3c3c;font-weight:400;font-family:'Liberation Mono', monospace;letter-spacing:0.050px;transform:scaleY(1.090);transform-origin:0 18px;-webkit-text-stroke:0.30px #3c3c3c;">2021-02-23 07:37:40.487</div>
<div class="t" style="left:1544.8px;top:878.00px;font-size:24.00px;color:#3c3c3c;font-weight:400;font-family:'Liberation Mono', monospace;letter-spacing:0.064px;transform:scaleY(1.090);transform-origin:0 18px;-webkit-text-stroke:0.30px #3c3c3c;">5657</div>
<div class="t" style="left:1708.8px;top:878.00px;font-size:24.00px;color:#3c3c3c;font-weight:400;font-family:'Liberation Mono', monospace;transform:scaleY(1.090);transform-origin:0 18px;-webkit-text-stroke:0.30px #3c3c3c;">3</div>
<div class="r" style="left:600px;top:904px;width:1312px;height:2px;background:#c8c8c8;"></div>
<div class="t" style="left:618.3px;top:926.00px;font-size:24.00px;color:#3c3c3c;font-weight:400;font-family:'Liberation Mono', monospace;transform:scaleY(1.090);transform-origin:0 18px;-webkit-text-stroke:0.30px #3c3c3c;">7</div>
<div class="t" style="left:679.1px;top:926.00px;font-size:24.00px;color:#3c3c3c;font-weight:400;font-family:'Liberation Mono', monospace;transform:scaleY(1.090);transform-origin:0 18px;-webkit-text-stroke:0.30px #3c3c3c;">2</div>
<div class="t" style="left:747.0px;top:926.00px;font-size:24.00px;color:#3c3c3c;font-weight:400;font-family:'Liberation Mono', monospace;letter-spacing:0.050px;transform:scaleY(1.090);transform-origin:0 18px;-webkit-text-stroke:0.30px #3c3c3c;">54781251345f4ec5abf0637f2…</div>
<div class="t" style="left:1173.3px;top:926.00px;font-size:24.00px;color:#3c3c3c;font-weight:400;font-family:'Liberation Mono', monospace;letter-spacing:0.050px;transform:scaleY(1.090);transform-origin:0 18px;-webkit-text-stroke:0.30px #3c3c3c;">2021-02-23 07:37:40.483</div>
<div class="t" style="left:1544.8px;top:926.00px;font-size:24.00px;color:#3c3c3c;font-weight:400;font-family:'Liberation Mono', monospace;letter-spacing:0.064px;transform:scaleY(1.090);transform-origin:0 18px;-webkit-text-stroke:0.30px #3c3c3c;">2344</div>
<div class="t" style="left:1708.8px;top:926.00px;font-size:24.00px;color:#3c3c3c;font-weight:400;font-family:'Liberation Mono', monospace;transform:scaleY(1.090);transform-origin:0 18px;-webkit-text-stroke:0.30px #3c3c3c;">2</div>
<div class="r" style="left:600px;top:952px;width:1312px;height:2px;background:#c8c8c8;"></div>
<div class="t" style="left:618.3px;top:974.00px;font-size:24.00px;color:#3c3c3c;font-weight:400;font-family:'Liberation Mono', monospace;transform:scaleY(1.090);transform-origin:0 18px;-webkit-text-stroke:0.30px #3c3c3c;">8</div>
<div class="t" style="left:679.1px;top:974.00px;font-size:24.00px;color:#3c3c3c;font-weight:400;font-family:'Liberation Mono', monospace;letter-spacing:0.096px;transform:scaleY(1.090);transform-origin:0 18px;-webkit-text-stroke:0.30px #3c3c3c;">17</div>
<div class="t" style="left:747.0px;top:974.00px;font-size:24.00px;color:#3c3c3c;font-weight:400;font-family:'Liberation Mono', monospace;letter-spacing:0.050px;transform:scaleY(1.090);transform-origin:0 18px;-webkit-text-stroke:0.30px #3c3c3c;">6affbfd86e1e4ce8ac9298885…</div>
<div class="t" style="left:1173.3px;top:974.00px;font-size:24.00px;color:#3c3c3c;font-weight:400;font-family:'Liberation Mono', monospace;letter-spacing:0.050px;transform:scaleY(1.090);transform-origin:0 18px;-webkit-text-stroke:0.30px #3c3c3c;">2021-02-23 07:37:40.517</div>
<div class="t" style="left:1544.8px;top:974.00px;font-size:24.00px;color:#3c3c3c;font-weight:400;font-family:'Liberation Mono', monospace;letter-spacing:0.064px;transform:scaleY(1.090);transform-origin:0 18px;-webkit-text-stroke:0.30px #3c3c3c;">6077</div>
<div class="t" style="left:1708.8px;top:974.00px;font-size:24.00px;color:#3c3c3c;font-weight:400;font-family:'Liberation Mono', monospace;transform:scaleY(1.090);transform-origin:0 18px;-webkit-text-stroke:0.30px #3c3c3c;">2</div>
<div class="r" style="left:600px;top:1000px;width:1312px;height:2px;background:#c8c8c8;"></div>
<div class="t" style="left:618.3px;top:1022.00px;font-size:24.00px;color:#3c3c3c;font-weight:400;font-family:'Liberation Mono', monospace;transform:scaleY(1.090);transform-origin:0 18px;-webkit-text-stroke:0.30px #3c3c3c;">9</div>
<div class="t" style="left:679.1px;top:1022.00px;font-size:24.00px;color:#3c3c3c;font-weight:400;font-family:'Liberation Mono', monospace;letter-spacing:0.096px;transform:scaleY(1.090);transform-origin:0 18px;-webkit-text-stroke:0.30px #3c3c3c;">10</div>
<div class="t" style="left:747.0px;top:1022.00px;font-size:24.00px;color:#3c3c3c;font-weight:400;font-family:'Liberation Mono', monospace;letter-spacing:0.050px;transform:scaleY(1.090);transform-origin:0 18px;-webkit-text-stroke:0.30px #3c3c3c;">73b5043bd82b4b95b733ee8e6…</div>
<div class="t" style="left:1173.3px;top:1022.00px;font-size:24.00px;color:#3c3c3c;font-weight:400;font-family:'Liberation Mono', monospace;letter-spacing:0.050px;transform:scaleY(1.090);transform-origin:0 18px;-webkit-text-stroke:0.30px #3c3c3c;">2021-02-23 07:37:40.503</div>
<div class="t" style="left:1544.8px;top:1022.00px;font-size:24.00px;color:#3c3c3c;font-weight:400;font-family:'Liberation Mono', monospace;letter-spacing:0.064px;transform:scaleY(1.090);transform-origin:0 18px;-webkit-text-stroke:0.30px #3c3c3c;">1787</div>
<div class="t" style="left:1708.8px;top:1022.00px;font-size:24.00px;color:#3c3c3c;font-weight:400;font-family:'Liberation Mono', monospace;transform:scaleY(1.090);transform-origin:0 18px;-webkit-text-stroke:0.30px #3c3c3c;">1</div>
<div class="r" style="left:600px;top:1048px;width:1312px;height:2px;background:#c8c8c8;"></div>
<div class="t" style="left:618.3px;top:1070.00px;font-size:24.00px;color:#3c3c3c;font-weight:400;font-family:'Liberation Mono', monospace;letter-spacing:0.096px;transform:scaleY(1.090);transform-origin:0 18px;-webkit-text-stroke:0.30px #3c3c3c;">1…</div>
<div class="t" style="left:679.1px;top:1070.00px;font-size:24.00px;color:#3c3c3c;font-weight:400;font-family:'Liberation Mono', monospace;letter-spacing:0.096px;transform:scaleY(1.090);transform-origin:0 18px;-webkit-text-stroke:0.30px #3c3c3c;">15</div>
<div class="t" style="left:747.0px;top:1070.00px;font-size:24.00px;color:#3c3c3c;font-weight:400;font-family:'Liberation Mono', monospace;letter-spacing:0.050px;transform:scaleY(1.090);transform-origin:0 18px;-webkit-text-stroke:0.30px #3c3c3c;">78ebd927a1614713b4601ab6a…</div>
<div class="t" style="left:1173.3px;top:1070.00px;font-size:24.00px;color:#3c3c3c;font-weight:400;font-family:'Liberation Mono', monospace;letter-spacing:0.050px;transform:scaleY(1.090);transform-origin:0 18px;-webkit-text-stroke:0.30px #3c3c3c;">2021-02-23 07:37:40.513</div>
<div class="t" style="left:1544.8px;top:1070.00px;font-size:24.00px;color:#3c3c3c;font-weight:400;font-family:'Liberation Mono', monospace;letter-spacing:0.064px;transform:scaleY(1.090);transform-origin:0 18px;-webkit-text-stroke:0.30px #3c3c3c;">1325</div>
<div class="t" style="left:1708.8px;top:1070.00px;font-size:24.00px;color:#3c3c3c;font-weight:400;font-family:'Liberation Mono', monospace;transform:scaleY(1.090);transform-origin:0 18px;-webkit-text-stroke:0.30px #3c3c3c;">1</div>
<div class="r" style="left:600px;top:1096px;width:1312px;height:2px;background:#c8c8c8;"></div>
<div class="t" style="left:618.3px;top:1118.00px;font-size:24.00px;color:#3c3c3c;font-weight:400;font-family:'Liberation Mono', monospace;letter-spacing:0.096px;transform:scaleY(1.090);transform-origin:0 18px;-webkit-text-stroke:0.30px #3c3c3c;">1…</div>
<div class="t" style="left:679.1px;top:1118.00px;font-size:24.00px;color:#3c3c3c;font-weight:400;font-family:'Liberation Mono', monospace;letter-spacing:0.096px;transform:scaleY(1.090);transform-origin:0 18px;-webkit-text-stroke:0.30px #3c3c3c;">11</div>
<div class="t" style="left:747.0px;top:1118.00px;font-size:24.00px;color:#3c3c3c;font-weight:400;font-family:'Liberation Mono', monospace;letter-spacing:0.050px;transform:scaleY(1.090);transform-origin:0 18px;-webkit-text-stroke:0.30px #3c3c3c;">7ae5c7c1755047758222c2b6d…</div>
<div class="t" style="left:1173.3px;top:1118.00px;font-size:24.00px;color:#3c3c3c;font-weight:400;font-family:'Liberation Mono', monospace;letter-spacing:0.050px;transform:scaleY(1.090);transform-origin:0 18px;-webkit-text-stroke:0.30px #3c3c3c;">2021-02-23 07:37:40.503</div>
<div class="t" style="left:1544.8px;top:1118.00px;font-size:24.00px;color:#3c3c3c;font-weight:400;font-family:'Liberation Mono', monospace;letter-spacing:0.064px;transform:scaleY(1.090);transform-origin:0 18px;-webkit-text-stroke:0.30px #3c3c3c;">1234</div>
<div class="t" style="left:1708.8px;top:1118.00px;font-size:24.00px;color:#3c3c3c;font-weight:400;font-family:'Liberation Mono', monospace;transform:scaleY(1.090);transform-origin:0 18px;-webkit-text-stroke:0.30px #3c3c3c;">3</div>
<div class="r" style="left:600px;top:1144px;width:1312px;height:2px;background:#c8c8c8;"></div>
<div class="t" style="left:618.3px;top:1166.00px;font-size:24.00px;color:#3c3c3c;font-weight:400;font-family:'Liberation Mono', monospace;letter-spacing:0.096px;transform:scaleY(1.090);transform-origin:0 18px;-webkit-text-stroke:0.30px #3c3c3c;">1…</div>
<div class="t" style="left:679.1px;top:1166.00px;font-size:24.00px;color:#3c3c3c;font-weight:400;font-family:'Liberation Mono', monospace;transform:scaleY(1.090);transform-origin:0 18px;-webkit-text-stroke:0.30px #3c3c3c;">1</div>
<div class="t" style="left:747.0px;top:1166.00px;font-size:24.00px;color:#3c3c3c;font-weight:400;font-family:'Liberation Mono', monospace;letter-spacing:0.050px;transform:scaleY(1.090);transform-origin:0 18px;-webkit-text-stroke:0.30px #3c3c3c;">8272fb307e894e529d040fdb1…</div>
<div class="t" style="left:1173.3px;top:1166.00px;font-size:24.00px;color:#3c3c3c;font-weight:400;font-family:'Liberation Mono', monospace;letter-spacing:0.050px;transform:scaleY(1.090);transform-origin:0 18px;-webkit-text-stroke:0.30px #3c3c3c;">2021-02-23 07:37:40.480</div>
<div class="t" style="left:1544.8px;top:1166.00px;font-size:24.00px;color:#3c3c3c;font-weight:400;font-family:'Liberation Mono', monospace;letter-spacing:0.064px;transform:scaleY(1.090);transform-origin:0 18px;-webkit-text-stroke:0.30px #3c3c3c;">1234</div>
<div class="t" style="left:1708.8px;top:1166.00px;font-size:24.00px;color:#3c3c3c;font-weight:400;font-family:'Liberation Mono', monospace;transform:scaleY(1.090);transform-origin:0 18px;-webkit-text-stroke:0.30px #3c3c3c;">1</div>
<div class="r" style="left:600px;top:1192px;width:1312px;height:2px;background:#c8c8c8;"></div>
<div class="t" style="left:618.3px;top:1214.00px;font-size:24.00px;color:#3c3c3c;font-weight:400;font-family:'Liberation Mono', monospace;letter-spacing:0.096px;transform:scaleY(1.090);transform-origin:0 18px;-webkit-text-stroke:0.30px #3c3c3c;">1…</div>
<div class="t" style="left:679.1px;top:1214.00px;font-size:24.00px;color:#3c3c3c;font-weight:400;font-family:'Liberation Mono', monospace;letter-spacing:0.096px;transform:scaleY(1.090);transform-origin:0 18px;-webkit-text-stroke:0.30px #3c3c3c;">16</div>
<div class="t" style="left:747.0px;top:1214.00px;font-size:24.00px;color:#3c3c3c;font-weight:400;font-family:'Liberation Mono', monospace;letter-spacing:0.050px;transform:scaleY(1.090);transform-origin:0 18px;-webkit-text-stroke:0.30px #3c3c3c;">8f35c1ebdc494a77a92dcaf1c…</div>
<div class="t" style="left:1173.3px;top:1214.00px;font-size:24.00px;color:#3c3c3c;font-weight:400;font-family:'Liberation Mono', monospace;letter-spacing:0.050px;transform:scaleY(1.090);transform-origin:0 18px;-webkit-text-stroke:0.30px #3c3c3c;">2021-02-23 07:37:40.513</div>
<div class="t" style="left:1544.8px;top:1214.00px;font-size:24.00px;color:#3c3c3c;font-weight:400;font-family:'Liberation Mono', monospace;letter-spacing:0.064px;transform:scaleY(1.090);transform-origin:0 18px;-webkit-text-stroke:0.30px #3c3c3c;">3997</div>
<div class="t" style="left:1708.8px;top:1214.00px;font-size:24.00px;color:#3c3c3c;font-weight:400;font-family:'Liberation Mono', monospace;transform:scaleY(1.090);transform-origin:0 18px;-webkit-text-stroke:0.30px #3c3c3c;">1</div>
<div class="r" style="left:600px;top:1240px;width:1312px;height:2px;background:#c8c8c8;"></div>
<div class="t" style="left:618.3px;top:1262.00px;font-size:24.00px;color:#3c3c3c;font-weight:400;font-family:'Liberation Mono', monospace;letter-spacing:0.096px;transform:scaleY(1.090);transform-origin:0 18px;-webkit-text-stroke:0.30px #3c3c3c;">1…</div>
<div class="t" style="left:679.1px;top:1262.00px;font-size:24.00px;color:#3c3c3c;font-weight:400;font-family:'Liberation Mono', monospace;letter-spacing:0.096px;transform:scaleY(1.090);transform-origin:0 18px;-webkit-text-stroke:0.30px #3c3c3c;">20</div>
<div class="t" style="left:747.0px;top:1262.00px;font-size:24.00px;color:#3c3c3c;font-weight:400;font-family:'Liberation Mono', monospace;letter-spacing:0.050px;transform:scaleY(1.090);transform-origin:0 18px;-webkit-text-stroke:0.30px #3c3c3c;">a0baadf63c104b5fa39cb47f0…</div>
<div class="t" style="left:1173.3px;top:1262.00px;font-size:24.00px;color:#3c3c3c;font-weight:400;font-family:'Liberation Mono', monospace;letter-spacing:0.050px;transform:scaleY(1.090);transform-origin:0 18px;-webkit-text-stroke:0.30px #3c3c3c;">2021-02-23 07:37:40.523</div>
<div class="t" style="left:1544.8px;top:1262.00px;font-size:24.00px;color:#3c3c3c;font-weight:400;font-family:'Liberation Mono', monospace;letter-spacing:0.064px;transform:scaleY(1.090);transform-origin:0 18px;-webkit-text-stroke:0.30px #3c3c3c;">1187</div>
<div class="t" style="left:1708.8px;top:1262.00px;font-size:24.00px;color:#3c3c3c;font-weight:400;font-family:'Liberation Mono', monospace;transform:scaleY(1.090);transform-origin:0 18px;-webkit-text-stroke:0.30px #3c3c3c;">1</div>
<div class="r" style="left:600px;top:1288px;width:1312px;height:2px;background:#c8c8c8;"></div>
<div class="t" style="left:618.3px;top:1310.00px;font-size:24.00px;color:#3c3c3c;font-weight:400;font-family:'Liberation Mono', monospace;letter-spacing:0.096px;transform:scaleY(1.090);transform-origin:0 18px;-webkit-text-stroke:0.30px #3c3c3c;">1…</div>
<div class="t" style="left:679.1px;top:1310.00px;font-size:24.00px;color:#3c3c3c;font-weight:400;font-family:'Liberation Mono', monospace;letter-spacing:0.096px;transform:scaleY(1.090);transform-origin:0 18px;-webkit-text-stroke:0.30px #3c3c3c;">14</div>
<div class="t" style="left:747.0px;top:1310.00px;font-size:24.00px;color:#3c3c3c;font-weight:400;font-family:'Liberation Mono', monospace;letter-spacing:0.050px;transform:scaleY(1.090);transform-origin:0 18px;-webkit-text-stroke:0.30px #3c3c3c;">cc86ccab7a6f4884aec126283…</div>
<div class="t" style="left:1173.3px;top:1310.00px;font-size:24.00px;color:#3c3c3c;font-weight:400;font-family:'Liberation Mono', monospace;letter-spacing:0.050px;transform:scaleY(1.090);transform-origin:0 18px;-webkit-text-stroke:0.30px #3c3c3c;">2021-02-23 07:37:40.510</div>
<div class="t" style="left:1544.8px;top:1310.00px;font-size:24.00px;color:#3c3c3c;font-weight:400;font-family:'Liberation Mono', monospace;letter-spacing:0.064px;transform:scaleY(1.090);transform-origin:0 18px;-webkit-text-stroke:0.30px #3c3c3c;">7846</div>
<div class="t" style="left:1708.8px;top:1310.00px;font-size:24.00px;color:#3c3c3c;font-weight:400;font-family:'Liberation Mono', monospace;transform:scaleY(1.090);transform-origin:0 18px;-webkit-text-stroke:0.30px #3c3c3c;">2</div>
<div class="r" style="left:600px;top:1336px;width:1312px;height:2px;background:#c8c8c8;"></div>
<div class="r" style="left:658px;top:618px;width:2px;height:700px;background:transparent;background-image:repeating-linear-gradient(to bottom,#bcbcbc 0 2px,transparent 2px 5px);"></div>
<div class="r" style="left:726px;top:618px;width:2px;height:700px;background:transparent;background-image:repeating-linear-gradient(to bottom,#bcbcbc 0 2px,transparent 2px 5px);"></div>
<div class="r" style="left:1152px;top:618px;width:2px;height:700px;background:transparent;background-image:repeating-linear-gradient(to bottom,#bcbcbc 0 2px,transparent 2px 5px);"></div>
<div class="r" style="left:1526px;top:618px;width:2px;height:700px;background:transparent;background-image:repeating-linear-gradient(to bottom,#bcbcbc 0 2px,transparent 2px 5px);"></div>
<div class="r" style="left:1689px;top:618px;width:2px;height:700px;background:transparent;background-image:repeating-linear-gradient(to bottom,#bcbcbc 0 2px,transparent 2px 5px);"></div>
<div class="r" style="left:1911px;top:618px;width:2px;height:700px;background:transparent;background-image:repeating-linear-gradient(to bottom,#bcbcbc 0 2px,transparent 2px 5px);"></div>
<div class="r" style="left:2386px;top:618px;width:28px;height:514px;background:#c6c6c6;"></div>
<svg class="r" style="left:2426px;top:562px;" width="32" height="32" viewBox="0 0 32 32"><path d="M2 6.2 L10.3 6.2 L6.6 2 L11.4 2 L16.3 8 L11.4 14 L6.6 14 L10.3 9.8 L2 9.8 Z" fill="#0052a3"/><g fill="none" stroke="#3c3c3c" stroke-width="2.2">
<path d="M7.5 16 L7.5 26.8 L26 26.8 L26 10 L21.5 5 L15 5"/><line x1="13.5" y1="13" x2="13.5" y2="26"/><line x1="19.5" y1="8" x2="19.5" y2="26"/></g>
<path d="M16 3.8 L21.5 3.8 L26 9.5 L16 9.5 Z" fill="#3c3c3c"/></svg>
<svg class="r" style="left:2426px;top:604px;" width="32" height="32" viewBox="0 0 32 32"><path d="M2 6.2 L10.3 6.2 L6.6 2 L11.4 2 L16.3 8 L11.4 14 L6.6 14 L10.3 9.8 L2 9.8 Z" fill="#0052a3"/><path d="M15.8 4.3 L20.5 4.3 L26.5 10.5 L26.5 12 L15.8 12 Z" fill="#3c3c3c"/>
<path d="M7.2 16.5 L7.2 27.2 L14 27.2" fill="none" stroke="#3c3c3c" stroke-width="2.2"/>
<rect x="16.4" y="16.4" width="13.6" height="11.8" fill="#3c3c3c"/>
<g fill="#ffffff"><rect x="18.3" y="18.6" width="2.4" height="2.6"/><rect x="22" y="18.6" width="2.4" height="2.6"/><rect x="25.7" y="18.6" width="2.4" height="2.6"/>
<rect x="18.3" y="23" width="2.4" height="2.6"/><rect x="22" y="23" width="2.4" height="2.6"/><rect x="25.7" y="23" width="2.4" height="2.6"/></g></svg>
<svg class="r" style="left:2426px;top:646px;" width="32" height="34" viewBox="0 0 32 34"><path d="M2 6.2 L10.3 6.2 L6.6 2 L11.4 2 L16.3 8 L11.4 14 L6.6 14 L10.3 9.8 L2 9.8 Z" fill="#0052a3"/><g fill="none" stroke="#3c3c3c" stroke-width="2.6" stroke-linejoin="round">
<path d="M12.3 16.3 C8 16.3 7.6 18.5 7.6 20.5 C7.6 22 6.8 22.6 5.3 22.6 C6.8 22.6 7.6 23.2 7.6 24.8 C7.6 27.5 8.2 29.3 12.3 29.3"/>
<path d="M22.3 6.3 C26.5 6.3 27 8 27 11 L27 16 C27 17.5 27.8 18.2 29.5 18.2 C27.8 18.2 27 18.9 27 20.4 L27 25 C27 28 26.5 29.5 22.3 29.5"/></g></svg>
<svg class="r" style="left:2426px;top:688px;" width="32" height="32" viewBox="0 0 32 32"><path d="M2 6.2 L10.3 6.2 L6.6 2 L11.4 2 L16.3 8 L11.4 14 L6.6 14 L10.3 9.8 L2 9.8 Z" fill="#0052a3"/><path d="M11.5 14.5 L4 22 L11.5 29.5 M18.5 11 L28 19.5 L18.5 28" fill="none" stroke="#3c3c3c" stroke-width="3.2"/></svg>
<svg class="r" style="left:2426px;top:730px;" width="32" height="34" viewBox="0 0 32 34"><g fill="#3c3c3c"><rect x="4" y="14" width="4.3" height="16"/><rect x="10.5" y="18" width="4.3" height="12"/><rect x="16.8" y="4" width="4.3" height="26"/><rect x="23" y="14" width="4.3" height="16"/></g></svg>
</div>
<svg class="r" style="left:20px;top:1324px;" width="32" height="32" viewBox="0 0 32 32"><circle cx="15.8" cy="15.7" r="11.2" fill="none" stroke="#fff" stroke-width="1.6"/><g stroke="#fff" stroke-width="1.6"><line x1="11.1" y1="11.5" x2="20.8" y2="21.5"/><line x1="20.8" y1="11.5" x2="11.1" y2="21.5"/></g></svg>
<div class="t" style="left:57.9px;top:1328.40px;font-size:24.50px;color:#ffffff;font-weight:400;font-family:'Liberation Sans', sans-serif;">0</div>
<svg class="r" style="left:78px;top:1324px;" width="30" height="30" viewBox="0 0 30 30"><path d="M14.8 4.5 L25.8 25.3 L3.8 25.3 Z" fill="none" stroke="#fff" stroke-width="1.6" stroke-linejoin="miter"/><line x1="14.8" y1="11.5" x2="14.8" y2="19" stroke="#fff" stroke-width="1.8"/><rect x="13.9" y="20.8" width="1.8" height="1.8" fill="#fff"/></svg>
<div class="t" style="left:114.6px;top:1328.40px;font-size:24.50px;color:#ffffff;font-weight:400;font-family:'Liberation Sans', sans-serif;">0</div>
<div class="t" style="left:1100.0px;top:1328.00px;font-size:24.50px;color:#ffffff;font-weight:400;font-family:'Liberation Sans', sans-serif;letter-spacing:-0.549px;">Ln 1, Col 1</div>
<div class="t" style="left:1245.0px;top:1328.00px;font-size:24.50px;color:#ffffff;font-weight:400;font-family:'Liberation Sans', sans-serif;letter-spacing:0.255px;">Spaces: 4</div>
<div class="t" style="left:1390.0px;top:1328.00px;font-size:24.50px;color:#ffffff;font-weight:400;font-family:'Liberation Sans', sans-serif;letter-spacing:0.647px;">UTF-8</div>
<div class="t" style="left:1495.0px;top:1328.00px;font-size:24.50px;color:#ffffff;font-weight:400;font-family:'Liberation Sans', sans-serif;letter-spacing:-1.660px;">CRLF</div>
<div class="t" style="left:1587.0px;top:1328.00px;font-size:24.50px;color:#ffffff;font-weight:400;font-family:'Liberation Sans', sans-serif;letter-spacing:-1.512px;">SQL</div>
<div class="t" style="left:1666.5px;top:1328.00px;font-size:24.50px;color:#ffffff;font-weight:400;font-family:'Liberation Sans', sans-serif;letter-spacing:-0.819px;">MSSQL</div>
<div class="t" style="left:1783.0px;top:1328.00px;font-size:24.50px;color:#ffffff;font-weight:400;font-family:'Liberation Sans', sans-serif;letter-spacing:0.369px;">20 rows</div>
<div class="t" style="left:1904.0px;top:1328.00px;font-size:24.50px;color:#ffffff;font-weight:400;font-family:'Liberation Sans', sans-serif;letter-spacing:1.233px;">00:00:00</div>
<div class="t" style="left:2041.5px;top:1328.00px;font-size:24.50px;color:#ffffff;font-weight:400;font-family:'Liberation Sans', sans-serif;letter-spacing:0.368px;">localhost : datawarehouse</div>
<svg class="r" style="left:2364px;top:1322px;" width="36" height="36" viewBox="0 0 36 36"><g fill="none" stroke="#fff" stroke-width="1.6">
<circle cx="14.2" cy="17" r="4.6"/><path d="M6.3 29.7 C6.3 24.5 9.5 22.2 14.2 22.2 C18.9 22.2 22 24.5 22 29.7"/>
<path d="M12.3 10.5 L12.3 6.5 L29.9 6.5 L29.9 17.7 L26 17.7 L22.8 21.4 L22.8 18.5"/></g></svg>
<svg class="r" style="left:2426px;top:1322px;" width="34" height="36" viewBox="0 0 34 36"><g fill="none" stroke="#fff" stroke-width="1.6">
<path d="M15.5 6 C10 7 8.2 11.5 8.2 16 L8 20.5 L6.2 26 L26.2 26 L24.6 20.5 L24.2 18.5"/>
<path d="M12.8 26.5 C12.8 30.3 18.8 30.3 18.8 26.5"/></g>
<circle cx="22.8" cy="11" r="5" fill="#fff"/></svg>
</body></html>
